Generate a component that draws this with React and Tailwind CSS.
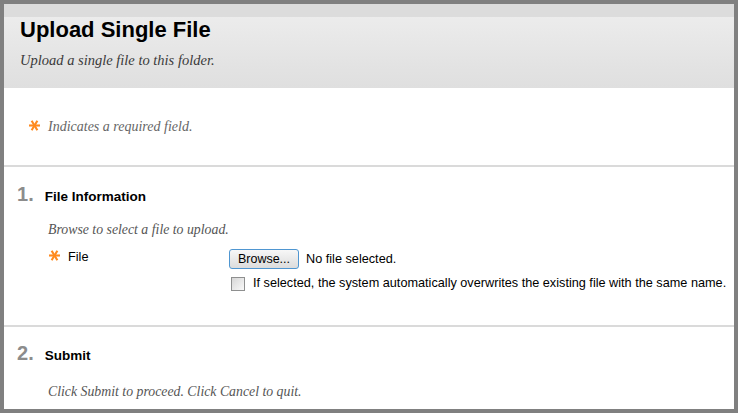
import React from 'react';

const sans = { fontFamily: '"Liberation Sans", Arial, sans-serif' };
const serif = { fontFamily: '"Liberation Serif", "Times New Roman", serif' };

// orange required marker
const Asterisk = ({ className = '' }) => (
  <svg width="11" height="11" viewBox="0 0 10 10" className={className}>
    <g stroke="#ff8a1f" strokeWidth="1.9" strokeLinecap="butt">
      <line x1="0" y1="5" x2="10" y2="5" />
      <line x1="2.4" y1="0.6" x2="7.6" y2="9.4" />
      <line x1="7.6" y1="0.6" x2="2.4" y2="9.4" />
    </g>
  </svg>
);

const Divider = () => <div className="h-[2px] bg-[#dadada]" />;

const StepTitle = ({ num, title }) => (
  <div className="h-[24px] flex items-baseline gap-[11px] pl-[13px]" style={sans}>
    <span className="text-[20px] leading-[24px] font-bold text-[#8c8c8c]">{num}.</span>
    <span className="text-[13.5px] leading-[24px] font-bold text-black">{title}</span>
  </div>
);

const Hint = ({ children, className = '' }) => (
  <p className={`pl-[44px] text-[13.8px] leading-[16px] italic text-[#555] ${className}`} style={serif}>
    {children}
  </p>
);

export default function App() {
  return (
    <div className="w-[738px] h-[413px] bg-[#808080] p-[4px] overflow-hidden">
      <div className="h-full bg-white flex flex-col">
        {/* Header */}
        <div className="h-[84px] flex flex-col bg-linear-to-b from-[#eeeeee] to-[#dfdfdf]">
          <div className="h-[13px] bg-[#dcdcdc]" />
          <h1 className="mt-[1px] pl-[16px] text-[22px] leading-[24px] font-bold text-black" style={sans}>
            Upload Single File
          </h1>
          <p className="mt-[10px] pl-[16px] text-[14.5px] leading-[16px] italic text-[#3a3a3a]" style={serif}>
            Upload a single file to this folder.
          </p>
        </div>

        {/* Required note */}
        <div className="mt-[31px] flex items-start pl-[25px]">
          <Asterisk className="mt-[1px]" />
          <span className="ml-[8px] text-[14px] leading-[16px] italic text-[#666]" style={serif}>
            Indicates a required field.
          </span>
        </div>

        <div className="mt-[30px]">
          <Divider />
        </div>

        {/* Step 1 */}
        <div className="mt-[15px]">
          <StepTitle num="1" title="File Information" />
        </div>
        <Hint className="mt-[16px]">Browse to select a file to upload.</Hint>

        <div className="mt-[11px] flex text-[12.7px] leading-[16px] text-black" style={sans}>
          <div className="w-[225px] flex items-start pl-[45px]">
            <Asterisk className="mt-[1px]" />
            <span className="ml-[8px]">File</span>
          </div>
          <div className="flex flex-col">
            <div className="flex items-center">
              <button className="w-[70px] h-[20px] rounded-[3px] border border-[#4f96d1] bg-linear-to-b from-[#f7f7f7] to-[#dcdcdc] text-[12.5px] leading-[16px] text-black">
                Browse...
              </button>
              <span className="ml-[7px]">No file selected.</span>
            </div>
            <div className="mt-[6px] flex items-start">
              <span className="mt-[2px] ml-[2px] w-[14px] h-[14px] border border-[#8e8f8f] bg-linear-to-br from-[#d6d6d6] to-[#f9f9f9] shrink-0" />
              <span className="ml-[8px]">
                If selected, the system automatically overwrites the existing file with the same name.
              </span>
            </div>
          </div>
        </div>

        <div className="mt-[34px]">
          <Divider />
        </div>

        {/* Step 2 */}
        <div className="mt-[14px]">
          <StepTitle num="2" title="Submit" />
        </div>
        <Hint className="mt-[19px]">Click Submit to proceed. Click Cancel to quit.</Hint>
      </div>
    </div>
  );
}
